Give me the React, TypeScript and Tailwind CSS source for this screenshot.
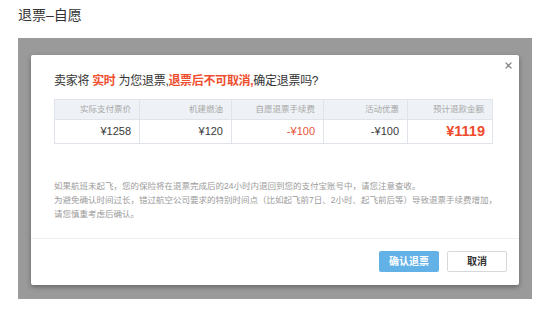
const headers = ["实际支付票价", "机建燃油", "自愿退票手续费", "活动优惠", "预计退款金额"];

function CloseIcon() {
  return (
    <svg width="7" height="7" viewBox="0 0 7 7" className="block">
      <path d="M1 1L6 6M6 1L1 6" stroke="#8a8a8a" strokeWidth="1.3" strokeLinecap="round" />
    </svg>
  );
}

export default function App() {
  return (
    <div
      className="w-[550px] h-[310px] bg-white overflow-hidden"
      style={{ fontFamily: '"Liberation Sans", "Noto Sans CJK SC", sans-serif' }}
    >
      <div className="h-[38px] pl-[18px] pt-[5px] text-[14px] leading-[20px] text-[#333]">退票–自愿</div>

      <div className="ml-[18px] w-[514px] h-[261px] bg-[#9a9a9a] pt-[17px] pl-[13px]">
        <div className="relative w-[488px] h-[230px] bg-white rounded-[2px] shadow-[0_2px_5px_rgba(0,0,0,0.35)] flex flex-col">
          <button className="absolute top-[7px] right-[7px]">
            <CloseIcon />
          </button>

          <div className="pt-[18px] pl-[23px]">
            <p className="h-[16px] text-[12px] leading-[16px] text-[#333] whitespace-nowrap tracking-[-0.3px]">
              卖家将 <span className="text-[#ef4f2f] font-bold">实时</span> 为您退票,
              <span className="text-[#ef4f2f] font-bold">退票后不可取消,</span>确定退票吗?
            </p>

            <div className="mt-[10px] w-[439px] border border-[#dfe4ea]">
              <div className="grid grid-cols-[85px_92px_92px_84px_84px] h-[19px] bg-[#eef2f6] text-[8.5px] leading-[19px] text-[#a8a8a8]">
                {headers.map((h, i) => (
                  <div key={h} className={`text-right pr-[8px] ${i < 4 ? "border-r border-[#dfe4ea]" : ""}`}>
                    {h}
                  </div>
                ))}
              </div>
              <div className="grid grid-cols-[85px_92px_92px_84px_84px] h-[24px] border-t border-[#dfe4ea] items-center text-[11px] leading-[23px]">
                <div className="text-right pr-[8px] border-r border-[#dfe4ea] text-[#3a3a3a] h-full">¥1258</div>
                <div className="text-right pr-[8px] border-r border-[#dfe4ea] text-[#3a3a3a] h-full">¥120</div>
                <div className="text-right pr-[8px] border-r border-[#dfe4ea] text-[#e8553a] h-full">-¥100</div>
                <div className="text-right pr-[8px] border-r border-[#dfe4ea] text-[#3a3a3a] h-full">-¥100</div>
                <div className="text-right pr-[7px] text-[#ef4a2c] text-[14.5px] font-bold h-full">¥1119</div>
              </div>
            </div>

            <div className="mt-[35px] text-[8.5px] leading-[14px] text-[#9b9b9b] whitespace-nowrap">
              <p>如果航班未起飞，您的保险将在退票完成后的24小时内退回到您的支付宝账号中，请您注意查收。</p>
              <p>为避免确认时间过长，错过航空公司要求的特别时间点（比如起飞前7日、2小时、起飞前后等）导致退票手续费增加，</p>
              <p>请您慎重考虑后确认。</p>
            </div>
          </div>

          <div className="mt-auto border-t border-[#f0f0f0] pt-[12px] pb-[13px] pr-[12px] flex justify-end gap-[8px]">
            <button className="w-[60px] h-[21px] rounded-[2px] bg-[#62b2e8] text-white text-[10px] font-bold">
              确认退票
            </button>
            <button className="w-[60px] h-[21px] rounded-[2px] bg-white border border-[#d5d9de] text-[#333] text-[10px] font-bold">
              取消
            </button>
          </div>
        </div>
      </div>
    </div>
  );
}
